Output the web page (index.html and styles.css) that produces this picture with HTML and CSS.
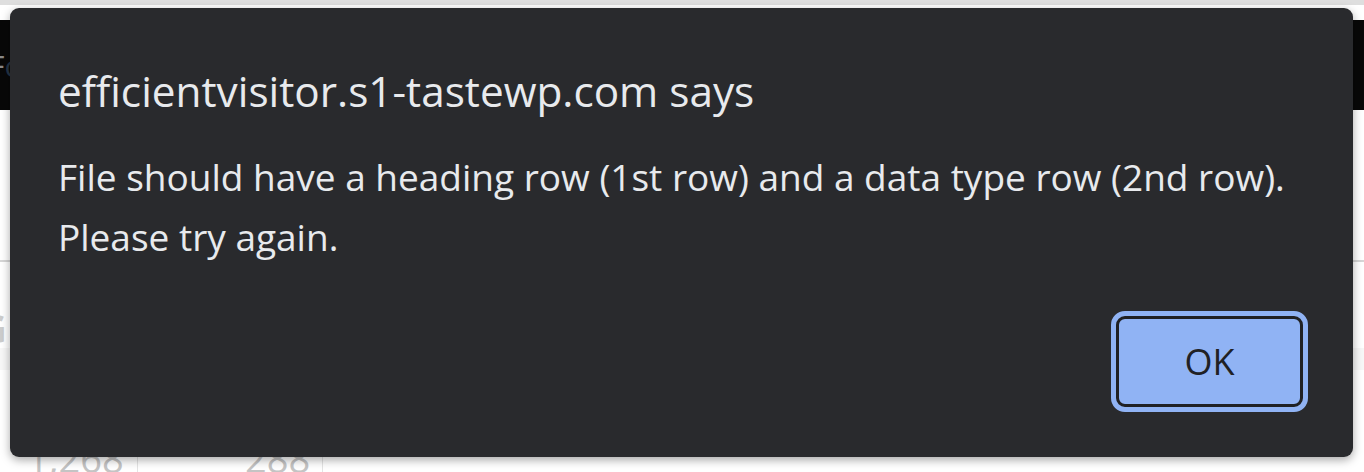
FILE: index.html
```html
<!DOCTYPE html>
<html lang="en">
<head>
<meta charset="utf-8">
<title>Alert</title>
<link rel="stylesheet" href="styles.css">
</head>
<body>
<div class="page">
  <div class="topstrip"></div>
  <div class="gap"></div>
  <div class="navbar"><span class="brand"><span class="brand-f">F</span><span class="brand-o">o</span></span></div>
  <div class="content">
    <div class="rule"></div>
    <div class="heading">G</div>
    <div class="band"></div>
    <div class="stats">
      <span class="stat">1,268</span>
      <span class="stat stat-b">288</span>
    </div>
  </div>
</div>
<div class="dialog" role="alertdialog">
  <div class="dialog-title">efficientvisitor.s1-tastewp.com says</div>
  <div class="dialog-body">File should have a heading row (1st row) and a data type row (2nd row).<br>Please try again.</div>
  <div class="dialog-actions"><button class="ok-btn">OK</button></div>
</div>
</body>
</html>
```
FILE: styles.css
```css
html, body { margin: 0; padding: 0; }
body {
  width: 1364px;
  height: 472px;
  overflow: hidden;
  position: relative;
  background: #ffffff;
  font-family: "Open Sans", "Noto Sans", sans-serif;
}
.page { display: flex; flex-direction: column; }
.topstrip { height: 5px; background: #dedede; }
.gap { height: 15px; background: #ffffff; }
.navbar {
  height: 90px;
  background: #080808;
  display: flex;
  align-items: center;
}
.brand {
  font-size: 30px;
  margin-left: -11px;
}
.brand-f { color: #8a8a8a; }
.brand-o { color: #243447; }
.content { display: flex; flex-direction: column; }
.rule { height: 2px; background: #d6d6d6; margin-top: 150px; }
.heading {
  color: #cccccc;
  font-size: 40px;
  font-weight: 700;
  line-height: 40px;
  margin-top: 46px;
  margin-left: -22px;
}
.band { height: 22px; background: #f7f7f7; }
.stats {
  display: flex;
  margin-top: 68px;
  font-size: 38px;
  color: #c4c4c4;
  line-height: 40px;
}
.stat { padding-left: 27px; width: 110px; border-right: 1px solid #e4e4e4; }
.stat-b { padding-left: 107px; width: 77px; }

.dialog {
  position: absolute;
  left: 10px;
  top: 8px;
  width: 1343px;
  height: 449px;
  box-sizing: border-box;
  padding: 53px 50px 50px 48px;
  background: #292a2d;
  border-radius: 9px;
  box-shadow: 0 3px 10px rgba(0, 0, 0, 0.35);
  display: flex;
  flex-direction: column;
  color: #e8eaed;
}
.dialog-title { font-size: 42.3px; line-height: 60px; }
.dialog-body { font-size: 37px; line-height: 60px; margin-top: 26px; }
.dialog-actions { margin-top: auto; display: flex; justify-content: flex-end; }
.ok-btn {
  width: 187px;
  height: 91px;
  box-sizing: border-box;
  background: #90b3f4;
  border: 3px solid #202124;
  border-radius: 9px;
  outline: 5px solid #90b3f4;
  color: #202124;
  font-family: "Open Sans", "Noto Sans", sans-serif;
  font-size: 36px;
  padding: 0;
}
```
